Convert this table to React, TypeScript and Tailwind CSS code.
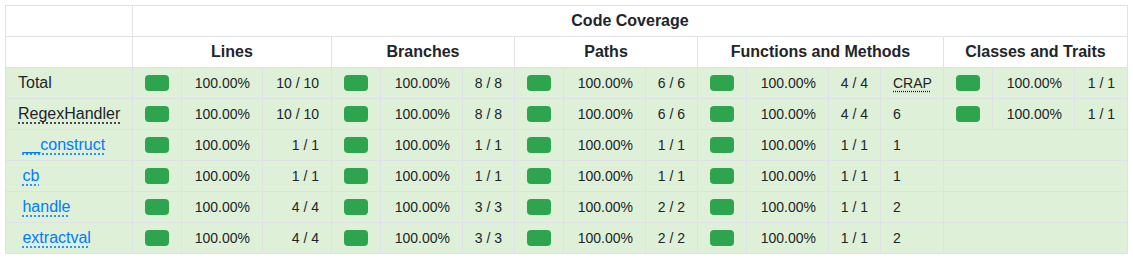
import React from 'react';

type Row = {
  name: string;
  kind: 'total' | 'class' | 'method';
  lines: string;
  branches: string;
  paths: string;
  methods: string;
  crap: string;
  classes?: string;
};

const ROWS: Row[] = [
  { name: 'Total', kind: 'total', lines: '10 / 10', branches: '8 / 8', paths: '6 / 6', methods: '4 / 4', crap: 'CRAP', classes: '1 / 1' },
  { name: 'RegexHandler', kind: 'class', lines: '10 / 10', branches: '8 / 8', paths: '6 / 6', methods: '4 / 4', crap: '6', classes: '1 / 1' },
  { name: '__construct', kind: 'method', lines: '1 / 1', branches: '1 / 1', paths: '1 / 1', methods: '1 / 1', crap: '1' },
  { name: 'cb', kind: 'method', lines: '1 / 1', branches: '1 / 1', paths: '1 / 1', methods: '1 / 1', crap: '1' },
  { name: 'handle', kind: 'method', lines: '4 / 4', branches: '3 / 3', paths: '2 / 2', methods: '1 / 1', crap: '2' },
  { name: 'extractval', kind: 'method', lines: '4 / 4', branches: '3 / 3', paths: '2 / 2', methods: '1 / 1', crap: '2' },
];

const cell = 'h-[31px] border-r border-b border-[#dee2e6] flex items-center';
const green = 'bg-[#dff0d8]';

const Bar = () => (
  <div className={`${cell} ${green} justify-center`}>
    <div className="w-6 h-4 rounded-[4px] bg-[#2ea44f]" />
  </div>
);

const Num = ({ children }: { children: React.ReactNode }) => (
  <div className={`${cell} ${green} justify-end pr-3 text-[14px]`}>{children}</div>
);

const Metric = ({ count }: { count: string }) => (
  <>
    <Bar />
    <Num>100.00%</Num>
    <Num>{count.replace(/ /g, '\u00a0')}</Num>
  </>
);

export default function App() {
  return (
    <div className="bg-white min-h-screen pt-[5px] pl-[5px]" style={{ fontFamily: '"Liberation Sans", Arial, sans-serif' }}>
      <div className="grid w-max grid-cols-[127px_49px_81px_69px_49px_82px_52px_49px_82px_52px_49px_82px_52px_63px_49px_82px_53px] border-t border-l border-[#dee2e6] text-[#212529]">
        <div className={cell} />
        <div className={`${cell} col-span-16 justify-center font-bold text-[16px]`}>Code Coverage</div>

        <div className={cell} />
        <div className={`${cell} col-span-3 justify-center font-bold text-[16px]`}>Lines</div>
        <div className={`${cell} col-span-3 justify-center font-bold text-[16px]`}>Branches</div>
        <div className={`${cell} col-span-3 justify-center font-bold text-[16px]`}>Paths</div>
        <div className={`${cell} col-span-4 justify-center font-bold text-[16px]`}>Functions and Methods</div>
        <div className={`${cell} col-span-3 justify-center font-bold text-[16px]`}>Classes and Traits</div>

        {ROWS.map((r) => (
          <React.Fragment key={r.name}>
            <div className={`${cell} ${green} pl-3 text-[16px]`}>
              {r.kind === 'total' && <span>{r.name}</span>}
              {r.kind === 'class' && (
                <abbr title="RegexHandler" className="underline decoration-dotted underline-offset-[4px]">{r.name}</abbr>
              )}
              {r.kind === 'method' && (
                <span>
                  {'\u00a0'}
                  <a href="#" className="text-[#007bff] underline decoration-dotted underline-offset-[4px]">{r.name}</a>
                </span>
              )}
            </div>
            <Metric count={r.lines} />
            <Metric count={r.branches} />
            <Metric count={r.paths} />
            <Metric count={r.methods} />
            <div className={`${cell} ${green} pl-3 text-[14px]`}>
              {r.crap === 'CRAP' ? (
                <abbr title="Change Risk Anti-Patterns (CRAP) Index" className="underline decoration-dotted underline-offset-[3px]">CRAP</abbr>
              ) : (
                r.crap
              )}
            </div>
            {r.classes ? <Metric count={r.classes} /> : <div className={`${cell} ${green} col-span-3`} />}
          </React.Fragment>
        ))}
      </div>
    </div>
  );
}
